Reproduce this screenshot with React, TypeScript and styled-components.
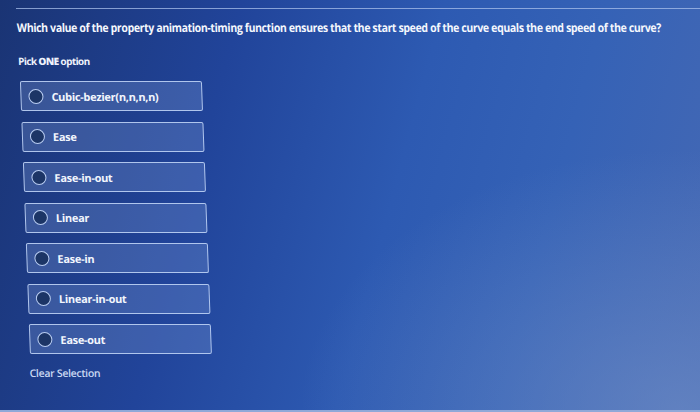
import React, { useState } from 'react'
import styled, { createGlobalStyle } from 'styled-components'

const GlobalStyle = createGlobalStyle`
  html, body {
    margin: 0;
    padding: 0;
  }
  body {
    font-family: "Open Sans", "Noto Sans", "Liberation Sans", sans-serif;
  }
`

const Page = styled.div`
  width: 700px;
  height: 412px;
  overflow: hidden;
  background:
    radial-gradient(ellipse 380px 260px at 680px 410px, rgba(115, 145, 200, 0.6), rgba(115, 145, 200, 0) 100%),
    linear-gradient(105deg, #1a3474 0%, #21449a 30%, #2d5ab2 55%, #3562b6 75%, #4669b4 100%);
  border-bottom: 2px solid #8ea8d8;
  box-sizing: border-box;
`

const TopRule = styled.div`
  margin: 8px 0 0 16px;
  height: 1px;
  background: rgba(170, 192, 235, 0.75);
`

const Content = styled.div`
  padding-left: 17px;
  transform: skewX(2.1deg);
  transform-origin: 0 20px;
  display: flex;
  flex-direction: column;
  align-items: flex-start;
`

const Question = styled.div`
  margin-top: 11px;
  font-size: 12px;
  line-height: 16px;
  font-weight: 700;
  letter-spacing: -0.4px;
  color: #f4f7fd;
  white-space: nowrap;
  transform: scaleX(0.875);
  transform-origin: 0 50%;
`

const PickLabel = styled.div`
  margin-top: 18px;
  font-size: 10px;
  line-height: 14px;
  font-weight: 700;
  letter-spacing: -0.6px;
  color: #eef2fb;

  b {
    font-weight: 800;
  }
`

const OptionList = styled.div`
  margin-top: 13px;
  margin-left: 1px;
  display: flex;
  flex-direction: column;
  gap: 10.5px;
`

const OptionCard = styled.label<{ $selected: boolean }>`
  width: 182px;
  height: 30px;
  box-sizing: border-box;
  display: flex;
  align-items: center;
  gap: 8px;
  padding-left: 7px;
  border: 1px solid rgba(190, 210, 245, 0.9);
  border-radius: 2px;
  background: ${p => (p.$selected ? 'rgba(255, 255, 255, 0.28)' : 'rgba(150, 180, 235, 0.24)')};
  cursor: pointer;
`

const Radio = styled.span<{ $selected: boolean }>`
  width: 15px;
  height: 15px;
  box-sizing: border-box;
  border-radius: 50%;
  border: 1.5px solid #b9cdf2;
  background: ${p => (p.$selected ? '#b9cdf2' : '#1c3566')};
  box-shadow: ${p => (p.$selected ? 'inset 0 0 0 3px #1c3566' : 'none')};
  flex-shrink: 0;
`

const OptionText = styled.span`
  font-size: 11px;
  font-weight: 700;
  letter-spacing: -0.3px;
  color: #f2f6fd;
`

const ClearButton = styled.button`
  margin-top: 12px;
  padding: 0;
  border: none;
  background: none;
  font-family: inherit;
  font-size: 10.5px;
  line-height: 14px;
  font-weight: 600;
  letter-spacing: -0.3px;
  color: #c9d8f2;
  cursor: pointer;
`

const options = [
  'Cubic-bezier(n,n,n,n)',
  'Ease',
  'Ease-in-out',
  'Linear',
  'Ease-in',
  'Linear-in-out',
  'Ease-out',
]

export default function App() {
  const [selected, setSelected] = useState<number | null>(null)

  return (
    <>
      <GlobalStyle />
      <Page>
        <TopRule />
        <Content>
          <Question>
            Which value of the property animation-timing function ensures that the start speed of the curve equals the end speed of the curve?
          </Question>
          <PickLabel>
            Pick <b>ONE</b> option
          </PickLabel>
          <OptionList>
            {options.map((opt, i) => (
              <OptionCard key={opt} $selected={selected === i} onClick={() => setSelected(i)}>
                <Radio $selected={selected === i} />
                <OptionText>{opt}</OptionText>
              </OptionCard>
            ))}
          </OptionList>
          <ClearButton onClick={() => setSelected(null)}>Clear Selection</ClearButton>
        </Content>
      </Page>
    </>
  )
}
